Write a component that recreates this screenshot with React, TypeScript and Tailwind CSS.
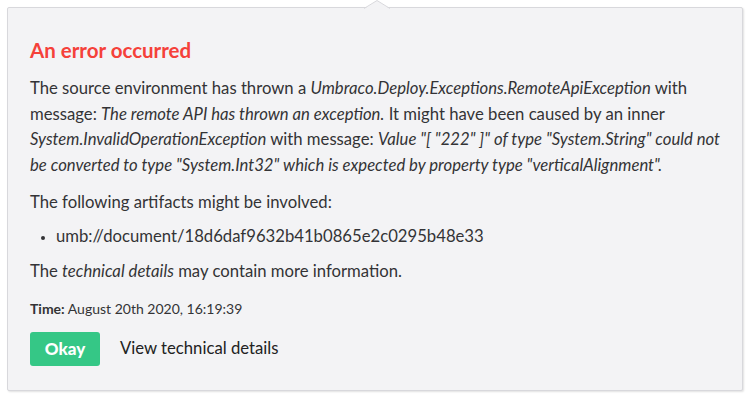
export default function App() {
  return (
    <div className="w-[754px] h-[402px] bg-white pt-[7px] pl-[7px] font-['Lato',sans-serif] text-[#333336]">
      <div className="relative w-[736px] h-[384px] bg-[#f3f3f5] border border-[#d8d8dc] rounded-[2px] shadow-[1px_1px_2px_rgba(0,0,0,0.12)] pl-[22px] pr-[18px] pt-[29px]">
        {/* arrow */}
        <svg className="absolute -top-[8px] left-[356px]" width="26" height="9" viewBox="0 0 26 9">
          <polygon points="0,9 13,0.5 26,9" fill="#f3f3f5" />
          <polyline points="0,8.5 13,0.5 26,8.5" fill="none" stroke="#d8d8dc" strokeWidth="1" />
        </svg>
        <h2 className="text-[20.5px] font-bold text-[#f5413a] leading-[26px]">An error occurred</h2>
        <p className="mt-[13px] text-[16.7px] leading-[25.7px]">
          The source environment has thrown a <i>Umbraco.Deploy.Exceptions.RemoteApiException</i> with
          message: <i>The remote API has thrown an exception.</i> It might have been caused by an inner{' '}
          <i>System.InvalidOperationException</i> with message:{' '}
          <i>Value "[ "222" ]" of type "System.String" could not be converted to type "System.Int32" which is expected by property type "verticalAlignment".</i>
        </p>
        <p className="mt-[11px] text-[16.7px] leading-[25.7px]">The following artifacts might be involved:</p>
        <ul className="mt-[8px] text-[16.7px] leading-[25.7px] list-disc pl-[26px] marker:text-[12px]">
          <li>umb://document/18d6daf9632b41b0865e2c0295b48e33</li>
        </ul>
        <p className="mt-[10px] text-[16.7px] leading-[25.7px]">
          The <i>technical details</i> may contain more information.
        </p>
        <p className="mt-[14px] text-[14px] leading-[20px]">
          <b>Time:</b> August 20th 2020, 16:19:39
        </p>
        <div className="mt-[13px] flex items-center gap-[20px]">
          <button className="h-[34px] w-[70px] rounded-[3px] bg-[#35c786] text-white font-black text-[17px]">Okay</button>
          <span className="text-[16.7px] text-[#222]">View technical details</span>
        </div>
      </div>
    </div>
  );
}
